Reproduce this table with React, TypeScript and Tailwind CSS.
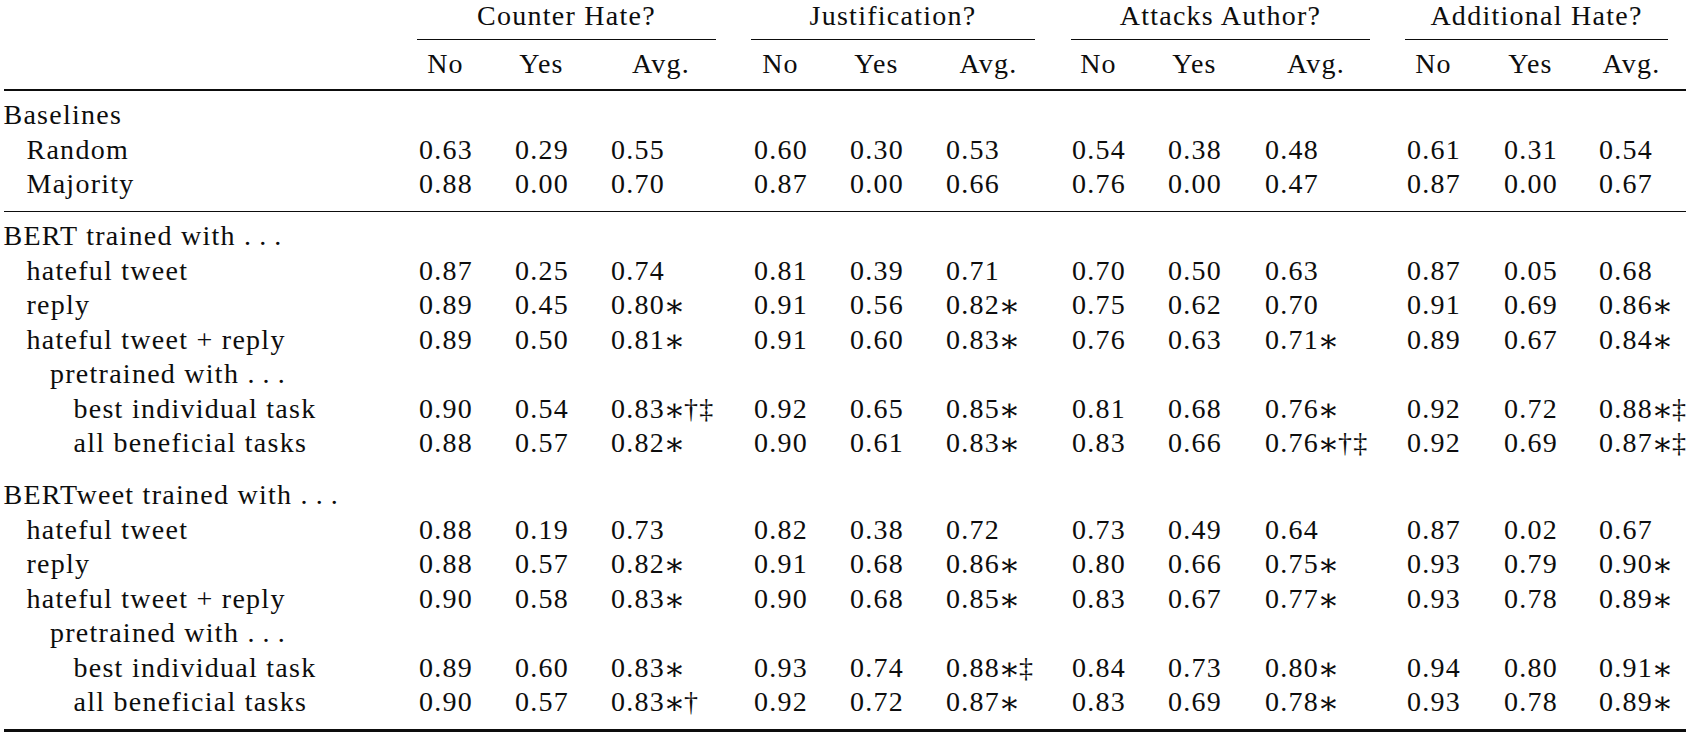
const cols =
  "grid grid-cols-[419px_96px_96px_143px_96px_96px_126px_96px_97px_142px_97px_95px_91px]";

type Row = { label: string; level: number; values?: string[] };

const indent = ["pl-[3.5px]", "pl-[26.5px]", "pl-[50px]", "pl-[73.5px]"];

const groups = [
  { title: "Counter Hate?", trim: "ml-[-2px] mr-[38px]", avg: "w-[100px]" },
  { title: "Justification?", trim: "ml-[-3px] mr-[37px]", avg: "w-[85px]" },
  { title: "Attacks Author?", trim: "ml-[-1px] mr-[37px]", avg: "w-[102px]" },
  { title: "Additional Hate?", trim: "ml-[-2px] mr-[22px]", avg: "w-[65px]" },
];

const dots = ".\u2009.\u2009.";

const baselines: Row[] = [
  { label: "Baselines", level: 0 },
  {
    label: "Random",
    level: 1,
    values: ["0.63", "0.29", "0.55", "0.60", "0.30", "0.53", "0.54", "0.38", "0.48", "0.61", "0.31", "0.54"],
  },
  {
    label: "Majority",
    level: 1,
    values: ["0.88", "0.00", "0.70", "0.87", "0.00", "0.66", "0.76", "0.00", "0.47", "0.87", "0.00", "0.67"],
  },
];

const bert: Row[] = [
  { label: `BERT trained with ${dots}`, level: 0 },
  {
    label: "hateful tweet",
    level: 1,
    values: ["0.87", "0.25", "0.74", "0.81", "0.39", "0.71", "0.70", "0.50", "0.63", "0.87", "0.05", "0.68"],
  },
  {
    label: "reply",
    level: 1,
    values: ["0.89", "0.45", "0.80∗", "0.91", "0.56", "0.82∗", "0.75", "0.62", "0.70", "0.91", "0.69", "0.86∗"],
  },
  {
    label: "hateful tweet + reply",
    level: 1,
    values: ["0.89", "0.50", "0.81∗", "0.91", "0.60", "0.83∗", "0.76", "0.63", "0.71∗", "0.89", "0.67", "0.84∗"],
  },
  { label: `pretrained with ${dots}`, level: 2 },
  {
    label: "best individual task",
    level: 3,
    values: ["0.90", "0.54", "0.83∗†‡", "0.92", "0.65", "0.85∗", "0.81", "0.68", "0.76∗", "0.92", "0.72", "0.88∗‡"],
  },
  {
    label: "all beneficial tasks",
    level: 3,
    values: ["0.88", "0.57", "0.82∗", "0.90", "0.61", "0.83∗", "0.83", "0.66", "0.76∗†‡", "0.92", "0.69", "0.87∗‡"],
  },
];

const bertweet: Row[] = [
  { label: `BERTweet trained with ${dots}`, level: 0 },
  {
    label: "hateful tweet",
    level: 1,
    values: ["0.88", "0.19", "0.73", "0.82", "0.38", "0.72", "0.73", "0.49", "0.64", "0.87", "0.02", "0.67"],
  },
  {
    label: "reply",
    level: 1,
    values: ["0.88", "0.57", "0.82∗", "0.91", "0.68", "0.86∗", "0.80", "0.66", "0.75∗", "0.93", "0.79", "0.90∗"],
  },
  {
    label: "hateful tweet + reply",
    level: 1,
    values: ["0.90", "0.58", "0.83∗", "0.90", "0.68", "0.85∗", "0.83", "0.67", "0.77∗", "0.93", "0.78", "0.89∗"],
  },
  { label: `pretrained with ${dots}`, level: 2 },
  {
    label: "best individual task",
    level: 3,
    values: ["0.89", "0.60", "0.83∗", "0.93", "0.74", "0.88∗‡", "0.84", "0.73", "0.80∗", "0.94", "0.80", "0.91∗"],
  },
  {
    label: "all beneficial tasks",
    level: 3,
    values: ["0.90", "0.57", "0.83∗†", "0.92", "0.72", "0.87∗", "0.83", "0.69", "0.78∗", "0.93", "0.78", "0.89∗"],
  },
];

// number followed by significance marks (∗ drawn from DejaVu, like a math asterisk)
const Value = ({ v }: { v: string }) => {
  const num = v.slice(0, 4);
  const marks = v.slice(4).split("");
  return (
    <div className="font-[Liberation_Serif] whitespace-nowrap">
      {num}
      {marks.map((m, i) =>
        m === "∗" ? (
          <span
            key={i}
            className="font-[DejaVu_Serif] text-[32px] align-[-3px] ml-[-1.5px] mr-[-2.5px]"
          >
            ∗
          </span>
        ) : (
          <span key={i}>{m}</span>
        )
      )}
    </div>
  );
};

const TableRow = ({ label, level, values }: Row) => {
  return (
    <div className={`${cols} h-[34.5px] leading-[34.5px]`}>
      <div className={`${indent[level]} font-[Liberation_Serif] whitespace-nowrap`}>{label}</div>
      {values ? values.map((v, i) => <Value key={i} v={v} />) : null}
    </div>
  );
};

const Block = ({ rows, top }: { rows: Row[]; top: string }) => {
  return (
    <div className={top}>
      {rows.map((r, i) => (
        <TableRow key={i} {...r} />
      ))}
    </div>
  );
};

export default function App() {
  return (
    <div className="w-[1690px] h-[734px] overflow-hidden bg-white text-[#0d0d0d] font-serif text-[28px] tracking-[0.045em]">
      <div className={`${cols} h-[40px]`}>
        <div />
        {groups.map((g) => (
          <div key={g.title} className="col-span-3">
            <div
              className={`${g.trim} h-[40px] border-b border-[#0d0d0d] text-center leading-[31px] font-[Liberation_Serif] whitespace-nowrap`}
            >
              {g.title}
            </div>
          </div>
        ))}
      </div>

      <div className={`${cols} h-[41px] pt-[6.5px] leading-[34.5px]`}>
        <div />
        {groups.map((g) => [
          <div key={g.title + "no"}>
            <div className="w-[53px] text-center font-[Liberation_Serif]">No</div>
          </div>,
          <div key={g.title + "yes"}>
            <div className="w-[53px] text-center font-[Liberation_Serif]">Yes</div>
          </div>,
          <div key={g.title + "avg"}>
            <div className={`${g.avg} text-center font-[Liberation_Serif]`}>Avg.</div>
          </div>,
        ])}
      </div>
      <div className="mt-[8px] ml-[4px] w-[1682px] h-[2px] bg-[#0d0d0d]" />

      <Block rows={baselines} top="pt-[7.3px]" />
      <div className="mt-[9.2px] ml-[4px] w-[1682px] h-px bg-[#0d0d0d]" />
      <Block rows={bert} top="pt-[7.3px]" />
      <Block rows={bertweet} top="pt-[17.5px]" />
      <div className="mt-[9.2px] ml-[4px] w-[1682px] h-[3px] bg-[#0d0d0d]" />
    </div>
  );
}
